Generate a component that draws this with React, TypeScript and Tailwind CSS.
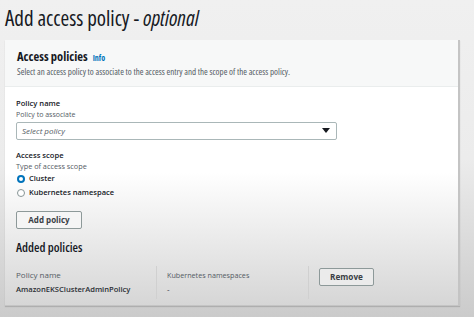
import React from "react";

export default function App() {
  const font = { fontFamily: '"Open Sans", "Noto Sans", sans-serif' };
  return (
    <div
      className="w-[474px] h-[317px] overflow-hidden bg-gradient-to-b from-[#f0f0f0] via-[#ececec] to-[#cbcbcb] text-[#16191f]"
      style={font}
    >
      <div className="pl-[5px] pt-[5px] h-[40px]">
        <h1 className="text-[21px] leading-[26px] font-stretch-[81%]">
          Add access policy - <i>optional</i>
        </h1>
      </div>
      <div className="ml-[5px] w-[455px] h-[266px] flex flex-col border-r-2 border-b border-[#c4c4c4] bg-gradient-to-b from-white via-white to-[#d6d6d6] shadow-[0_1px_1px_rgba(0,0,0,0.15)]">
        <div className="h-[47px] bg-[#f7f8f8] pl-[12px] pt-[9px] border-b border-[#eaeded]">
          <div className="flex items-baseline gap-[5px] font-stretch-[80%]">
            <span className="text-[12.5px] font-bold leading-[16px]">Access policies</span>
            <span className="text-[8px] font-bold text-[#0073bb]">Info</span>
          </div>
          <div className="text-[9px] leading-[12px] text-[#545b64] mt-[1px] font-stretch-[80%]">
            Select an access policy to associate to the access entry and the scope of the access policy.
          </div>
        </div>
        <div className="pl-[11px] pt-[10px] flex flex-col">
          <div className="text-[7.6px] leading-[12px] font-semibold text-[#16191f]">Policy name</div>
          <div className="text-[7px] leading-[11px] text-[#545b64]">Policy to associate</div>
          <div className="mt-[2px] w-[321px] h-[18px] border border-[#aab7b8] rounded-[2px] bg-white flex items-center justify-between pl-[5px] pr-[6px]">
            <span className="text-[8px] italic text-[#545b64]">Select policy</span>
            <svg width="8" height="6" viewBox="0 0 8 6">
              <path d="M0 0 L8 0 L4 5 Z" fill="#16191f" />
            </svg>
          </div>
          <div className="mt-[9px] text-[7.6px] leading-[12px] font-semibold">Access scope</div>
          <div className="text-[7.3px] leading-[11px] text-[#545b64]">Type of access scope</div>
          <div className="flex items-center gap-[4px] mt-[0px] h-[14px] pl-[1px]">
            <span className="w-[8px] h-[8px] rounded-full border-[2.5px] border-[#0073bb] bg-white" />
            <span className="text-[7.5px] font-semibold">Cluster</span>
          </div>
          <div className="flex items-center gap-[4px] h-[14px] pl-[1px]">
            <span className="w-[8px] h-[8px] rounded-full border border-[#879596] bg-white" />
            <span className="text-[7.5px] font-semibold">Kubernetes namespace</span>
          </div>
          <button className="mt-[11px] w-[66px] h-[18px] border border-[#8d9999] rounded-[2px] bg-[#f5f5f5] text-[8px] font-bold text-[#3a3f45]">
            Add policy
          </button>
          <div className="mt-[11px] text-[12.5px] leading-[16px] font-semibold font-stretch-[80%]">Added policies</div>
          <div className="mt-[10px] flex h-[33px]">
            <div className="w-[141px] border-r border-[#d0d0d0] pt-[3px]">
              <div className="text-[8px] leading-[12px] text-[#545b64]">Policy name</div>
              <div className="text-[7.6px] leading-[16px] font-semibold text-[#2b2f35]">AmazonEKSClusterAdminPolicy</div>
            </div>
            <div className="w-[152px] border-r border-[#d0d0d0] pl-[10px] pt-[3px]">
              <div className="text-[7.2px] leading-[12px] text-[#545b64]">Kubernetes namespaces</div>
              <div className="text-[8px] leading-[16px] text-[#2b2f35]">-</div>
            </div>
            <div className="pl-[10px] pt-[2px] flex items-start">
              <button className="w-[55px] h-[18px] border border-[#8d9999] rounded-[2px] bg-[#ebebeb] text-[8.2px] font-bold text-[#3a3f45]">
                Remove
              </button>
            </div>
          </div>
        </div>
      </div>
    </div>
  );
}
